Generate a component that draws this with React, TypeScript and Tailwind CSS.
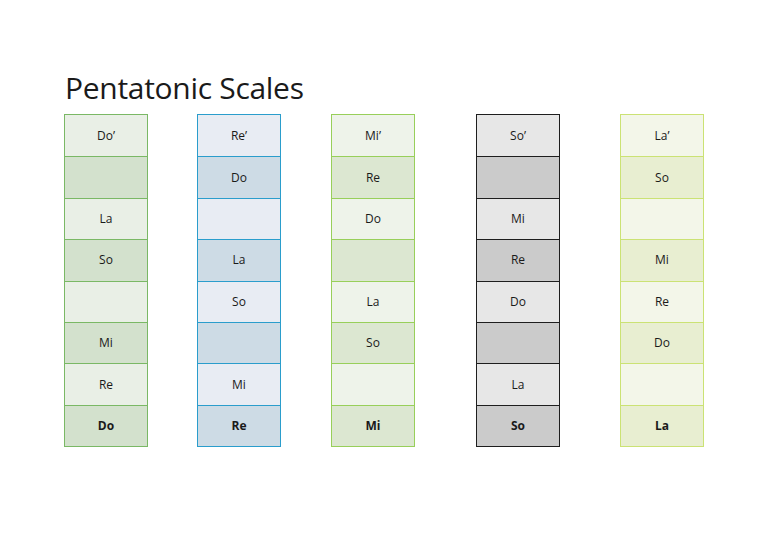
import React from 'react';

type Scale = {
  notes: string[];
  border: string;
  light: string;
  dark: string;
  ml: string;
};

const scales: Scale[] = [
  { notes: ['Do’', '', 'La', 'So', '', 'Mi', 'Re', 'Do'], border: 'border-[#7ab865]', light: 'bg-[#e9efe6]', dark: 'bg-[#d3e1cd]', ml: 'ml-0' },
  { notes: ['Re’', 'Do', '', 'La', 'So', '', 'Mi', 'Re'], border: 'border-[#2a9dcc]', light: 'bg-[#e8ecf3]', dark: 'bg-[#cddbe5]', ml: 'ml-[49px]' },
  { notes: ['Mi’', 'Re', 'Do', '', 'La', 'So', '', 'Mi'], border: 'border-[#98cf5a]', light: 'bg-[#eef3ea]', dark: 'bg-[#dce7d1]', ml: 'ml-[50px]' },
  { notes: ['So’', '', 'Mi', 'Re', 'Do', '', 'La', 'So'], border: 'border-[#1e1e1e]', light: 'bg-[#e7e7e7]', dark: 'bg-[#cbcbcb]', ml: 'ml-[61px]' },
  { notes: ['La’', 'So', '', 'Mi', 'Re', 'Do', '', 'La'], border: 'border-[#cbe274]', light: 'bg-[#f3f6e9]', dark: 'bg-[#e8eed1]', ml: 'ml-[60px]' },
];

export default function App() {
  return (
    <div className="w-[768px] h-[543px] bg-white pl-[64px] pt-[68px] font-['Open_Sans',sans-serif] text-[#1a1a1a]">
      <h1 className="text-[30px] leading-[40px] tracking-[-0.3px] ml-[1px] mb-[6px]">Pentatonic Scales</h1>
      <div className="flex">
        {scales.map((s, i) => (
          <div key={i} className={`w-[84px] border ${s.border} ${s.ml} flex flex-col`}>
            {s.notes.map((n, j) => (
              <div
                key={j}
                className={`h-[41.4px] flex items-center justify-center text-[12px] ${j > 0 ? `border-t ${s.border}` : ''} ${j % 2 === 1 ? s.dark : s.light} ${j === 7 ? 'font-bold' : ''}`}
              >
                {n}
              </div>
            ))}
          </div>
        ))}
      </div>
    </div>
  );
}
